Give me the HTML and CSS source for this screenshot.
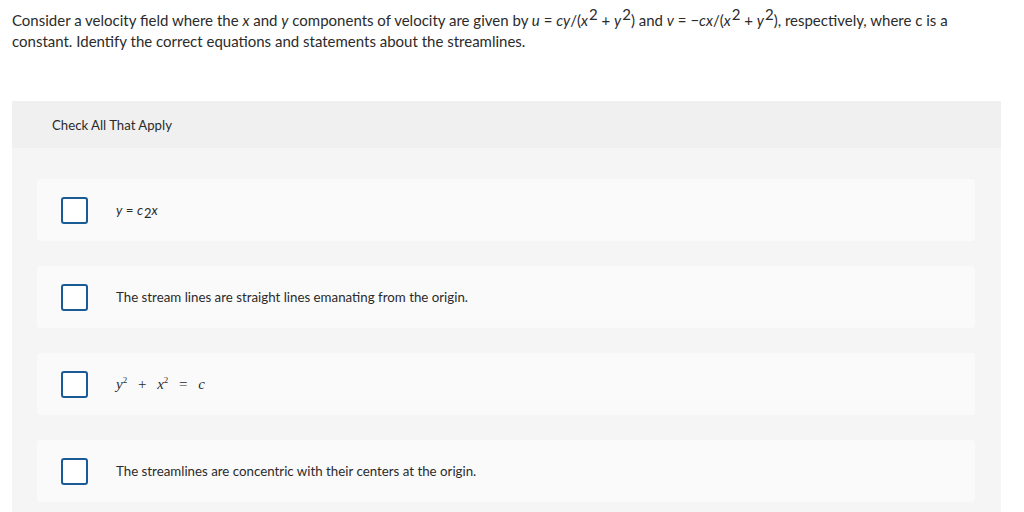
FILE: index.html
```html
<!DOCTYPE html>
<html>
<head>
<meta charset="utf-8">
<link rel="stylesheet" href="styles.css">
</head>
<body>
<p class="question">Consider a velocity field where the <i>x</i> and <i>y</i> components of velocity are given by <i>u</i> = <i>cy</i>/(<i>x</i><sup>2</sup> + <i>y</i><sup>2</sup>) and <i>v</i> = −<i>cx</i>/(<i>x</i><sup>2</sup> + <i>y</i><sup>2</sup>), respectively, where c is a constant. Identify the correct equations and statements about the streamlines.</p>
<div class="panel">
  <div class="panel-head">Check All That Apply</div>
  <div class="panel-body">
    <div class="option"><span class="box"></span><span class="label"><i>y</i> = <i>c</i><sub>2</sub><i>x</i></span></div>
    <div class="option"><span class="box"></span><span class="label">The stream lines are straight lines emanating from the origin.</span></div>
    <div class="option"><span class="box"></span><span class="label math"><i>y</i><sup>2</sup> + <i>x</i><sup>2</sup> = <i>c</i></span></div>
    <div class="option"><span class="box"></span><span class="label">The streamlines are concentric with their centers at the origin.</span></div>
  </div>
</div>
</body>
</html>
```
FILE: styles.css
```css
body {
  margin: 0;
  padding: 0 12px;
  font-family: Lato, "Liberation Sans", sans-serif;
  color: #2b2b2b;
  background: #fff;
}
.question {
  margin: 0;
  padding-top: 10px;
  font-size: 15px;
  line-height: 21px;
  width: 960px;
}
.question sup { font-size: 15px; line-height: 0; vertical-align: 6px; padding-left: 1px; }
.panel {
  margin-top: 49px;
  width: 989px;
  background: #f5f5f5;
}
.panel-head {
  background: #f0f0f0;
  height: 47px;
  display: flex;
  align-items: center;
  padding-left: 40px;
  font-size: 13.2px;
}
.panel-body {
  padding: 31px 26px 10px 25px;
  display: flex;
  flex-direction: column;
  gap: 25px;
}
.option {
  height: 62px;
  background: #fafafa;
  border-radius: 4px;
  display: flex;
  align-items: center;
  padding-left: 24px;
}
.box {
  width: 23px;
  height: 23px;
  border: 2px solid #1b5b95;
  border-radius: 3px;
  background: #fff;
  flex: none;
}
.label {
  margin-left: 28px;
  font-size: 13.3px;
}
.label sub { font-size: 13px; line-height: 0; vertical-align: -3px; padding-left: 1px; }
.math {
  font-family: "Liberation Serif", serif;
  font-size: 15px;
  word-spacing: 7px;
}
.math sup { font-size: 9px; line-height: 0; vertical-align: 6px; }
```
